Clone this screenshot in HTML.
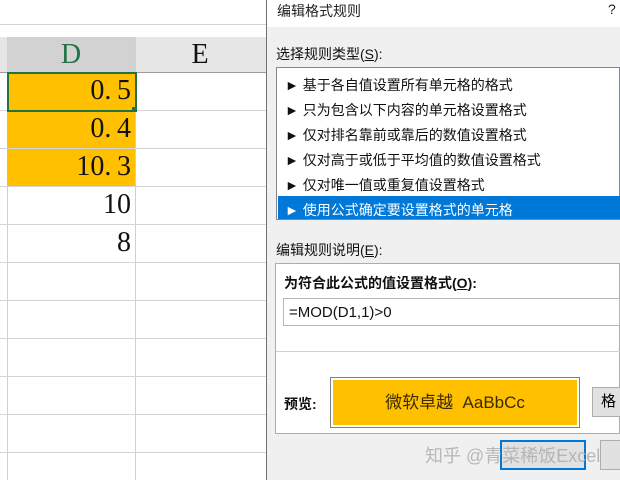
<!DOCTYPE html>
<html><head><meta charset="utf-8"><style>
body{margin:0;width:620px;height:480px;overflow:hidden;background:#fff;position:relative;font-family:"Liberation Sans","Microsoft YaHei","Noto Sans CJK SC",sans-serif}
.a{position:absolute}
.cell{position:absolute;font-family:"Liberation Serif","Noto Serif CJK SC",serif;font-size:28px;color:#111;text-align:right}
.it{position:absolute;left:285px;font-size:14px;color:#111;white-space:nowrap}
</style></head><body>
<div class="a" style="left:0;top:24px;width:267px;height:1px;background:#d4d4d4"></div>
<div class="a" style="left:0;top:37px;width:267px;height:35px;background:#e6e6e6;border-bottom:1px solid #9b9b9b"></div>
<div class="a" style="left:7px;top:37px;width:128px;height:35px;background:#d2d2d2"></div>
<div class="a" style="left:135px;top:37px;width:1px;height:443px;background:#d0d0d0"></div>
<div class="a" style="left:7px;top:37px;width:1px;height:443px;background:#d0d0d0"></div>
<div class="cell" style="left:7px;top:39px;width:128px;text-align:center;color:#217346">D</div>
<div class="cell" style="left:135px;top:39px;width:130px;text-align:center">E</div>
<div class="a" style="left:7px;top:73px;width:128px;height:113px;background:#ffc000"></div>
<script>
for(let y=110;y<480;y+=38){const d=document.createElement('div');d.className='a';d.style.cssText=`left:0;top:${y}px;width:267px;height:1px;background:#d4d4d4`;document.body.appendChild(d);}
</script>
<div class="a" style="left:7px;top:72px;width:126px;height:36px;border:2px solid #217346;box-sizing:content-box"></div>
<div class="a" style="left:132px;top:107px;width:5px;height:5px;background:#217346"></div>
<div class="cell" style="left:7px;top:75px;width:124px">0.&thinsp;5</div>
<div class="cell" style="left:7px;top:113px;width:124px">0.&thinsp;4</div>
<div class="cell" style="left:7px;top:151px;width:124px">10.&thinsp;3</div>
<div class="cell" style="left:7px;top:189px;width:124px">10</div>
<div class="cell" style="left:7px;top:227px;width:124px">8</div>

<div class="a" style="left:266px;top:0;width:354px;height:480px;background:#f0f0f0;border-left:1px solid #707070"></div>
<div class="a" style="left:267px;top:0;width:353px;height:27px;background:#fff"></div>
<div class="a" style="left:277px;top:1px;font-size:14px;color:#222">编辑格式规则</div>
<div class="a" style="left:608px;top:1px;font-size:14px;color:#222">?</div>
<div class="a" style="left:276px;top:44px;font-size:14px;color:#111">选择规则类型(<u>S</u>):</div>
<div class="a" style="left:276px;top:67px;width:344px;height:153px;background:#fff;border:1px solid #828790;box-sizing:border-box"></div>
<div class="a" style="left:278px;top:196px;width:342px;height:23px;background:#0078d7"></div>
<div class="it" style="top:75px">► 基于各自值设置所有单元格的格式</div>
<div class="it" style="top:100px">► 只为包含以下内容的单元格设置格式</div>
<div class="it" style="top:125px">► 仅对排名靠前或靠后的数值设置格式</div>
<div class="it" style="top:150px">► 仅对高于或低于平均值的数值设置格式</div>
<div class="it" style="top:175px">► 仅对唯一值或重复值设置格式</div>
<div class="it" style="top:200px;color:#fff">► 使用公式确定要设置格式的单元格</div>
<div class="a" style="left:276px;top:240px;font-size:14px;color:#111">编辑规则说明(<u>E</u>):</div>
<div class="a" style="left:275px;top:263px;width:345px;height:171px;background:#fff;border:1px solid #adadad;box-sizing:border-box"></div>
<div class="a" style="left:284px;top:273px;font-size:14px;font-weight:bold;color:#111">为符合此公式的值设置格式(<u>O</u>):</div>
<div class="a" style="left:283px;top:298px;width:337px;height:28px;border:1px solid #b8b8b8;box-sizing:border-box;background:#fff"></div>
<div class="a" style="left:289px;top:304px;font-size:15px;color:#111">=MOD(D1,1)&gt;0</div>
<div class="a" style="left:276px;top:351px;width:344px;height:1px;background:#d0d0d0"></div>
<div class="a" style="left:284px;top:394px;font-size:14px;font-weight:bold;color:#111">预览:</div>
<div class="a" style="left:330px;top:377px;width:250px;height:51px;border:1px solid #808080;box-sizing:border-box;background:#fff"></div>
<div class="a" style="left:333px;top:380px;width:244px;height:45px;background:#ffc000;text-align:center;line-height:45px;font-size:17px;color:#3a2a00">微软卓越&nbsp; AaBbCc</div>
<div class="a" style="left:592px;top:387px;width:30px;height:30px;background:#e1e1e1;border:1px solid #adadad;box-sizing:border-box;font-size:15px;line-height:28px;padding-left:8px">格</div>
<div class="a" style="left:500px;top:440px;width:86px;height:30px;border:2px solid #0078d7;box-sizing:border-box;background:#e1e1e1"></div>
<div class="a" style="left:600px;top:440px;width:22px;height:30px;border:1px solid #adadad;box-sizing:border-box;background:#e1e1e1"></div>
<div class="a" style="left:425px;top:442px;font-size:18px;color:rgba(170,170,170,.8)">知乎 @青菜稀饭Excel</div>
</body></html>
